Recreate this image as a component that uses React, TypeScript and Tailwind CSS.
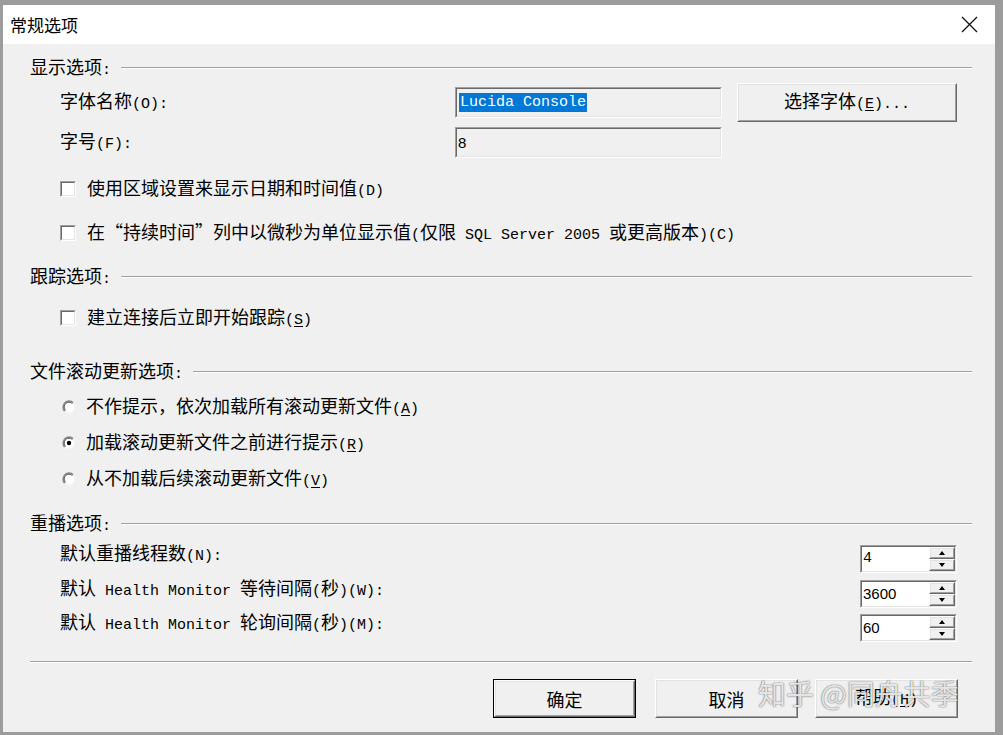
import React from "react";

function T({ s }: { s: string }) {
  const parts = s.split(/([\x20-\x7e]+)/).filter((p) => p.length > 0);
  return (
    <>
      {parts.map((p, i) => {
        if (/^[\x20-\x7e]+$/.test(p)) {
          const sub = p.split(/(&.)/).filter((q) => q.length > 0);
          return (
            <span key={i} className="font-['Liberation_Mono',monospace] text-[15px] whitespace-pre">
              {sub.map((q, j) =>
                q.startsWith("&") && q.length === 2 ? (
                  <span key={j} className="underline underline-offset-2">
                    {q[1]}
                  </span>
                ) : (
                  <span key={j}>{q}</span>
                )
              )}
            </span>
          );
        }
        return <span key={i}>{p}</span>;
      })}
    </>
  );
}

function Header({ s, mt }: { s: string; mt: string }) {
  return (
    <div className={`${mt} h-[20px] flex items-center`}>
      <span className="leading-[20px] whitespace-nowrap">
        <T s={s} />
      </span>
      <div className="flex-1 ml-[10px] mt-[-1px]">
        <div className="h-[1px] bg-[#a0a0a0]" />
        <div className="h-[1px] bg-white" />
      </div>
    </div>
  );
}

function Sunken({ className, inner, children }: { className: string; inner: string; children?: React.ReactNode }) {
  return (
    <div className={`${className} border border-t-[#a0a0a0] border-l-[#a0a0a0] border-r-white border-b-white`}>
      <div className={`w-full h-full border border-t-[#696969] border-l-[#696969] border-r-[#e3e3e3] border-b-[#e3e3e3] ${inner}`}>
        {children}
      </div>
    </div>
  );
}

function Raised({ className, children, def }: { className: string; children?: React.ReactNode; def?: boolean }) {
  const core = (
    <div className="w-full h-full border border-t-white border-l-white border-r-[#696969] border-b-[#696969]">
      <div className="w-full h-full border border-t-[#e3e3e3] border-l-[#e3e3e3] border-r-[#a0a0a0] border-b-[#a0a0a0] bg-[#f0f0f0] flex items-center justify-center">
        {children}
      </div>
    </div>
  );
  if (def) {
    return <div className={`${className} border border-black`}>{core}</div>;
  }
  return <div className={className}>{core}</div>;
}

function Checkbox({ s, mt }: { s: string; mt: string }) {
  return (
    <div className={`${mt} h-[20px] flex items-center pl-[30px]`}>
      <div className="w-[16px] h-[16px] border border-t-[#a0a0a0] border-l-[#a0a0a0] border-r-white border-b-white">
        <div className="w-full h-full border border-t-[#696969] border-l-[#696969] border-r-[#e3e3e3] border-b-[#e3e3e3] bg-white" />
      </div>
      <span className="ml-[11px] leading-[20px] whitespace-nowrap">
        <T s={s} />
      </span>
    </div>
  );
}

function Radio({ s, mt, checked }: { s: string; mt: string; checked?: boolean }) {
  return (
    <div className={`${mt} h-[20px] flex items-center pl-[32px]`}>
      <svg width="14" height="14" viewBox="0 0 14 14">
        <circle cx="7" cy="7" r="6" fill="#ffffff" />
        <path d="M2.76 11.24 A6 6 0 0 1 11.24 2.76" fill="none" stroke="#8a8a8a" strokeWidth="1.6" />
        <path d="M3.6 10.4 A4.8 4.8 0 0 1 10.4 3.6" fill="none" stroke="#5a5a5a" strokeWidth="1" />
        <path d="M11.24 2.76 A6 6 0 0 1 2.76 11.24" fill="none" stroke="#f4f4f4" strokeWidth="1.2" />
        {checked && <circle cx="7" cy="7" r="2.2" fill="#000000" />}
      </svg>
      <span className="ml-[10px] leading-[20px] whitespace-nowrap">
        <T s={s} />
      </span>
    </div>
  );
}

function SpinRow({ label, value, mt, mono }: { label: string; value: string; mt: string; mono?: boolean }) {
  return (
    <div className={`${mt} flex items-start pl-[30px] pr-[15px]`}>
      <div className="flex-1 -mt-[3px] leading-[20px] whitespace-nowrap">
        <T s={label} />
      </div>
      <Sunken className="w-[97px] h-[28px]" inner="bg-white flex items-center">
        <span
          className={`flex-1 pl-[1px] leading-[20px] ${
            mono ? "font-['Liberation_Mono',monospace] text-[15px]" : "font-['Liberation_Sans',Arial,sans-serif] text-[15px]"
          }`}
        >
          {value}
        </span>
        <div className="w-[26px] h-full flex flex-col">
          <Raised className="w-full flex-1">
            <svg width="6" height="4" viewBox="0 0 6 4">
              <path d="M0 4 L3 0 L6 4 Z" fill="#000" />
            </svg>
          </Raised>
          <Raised className="w-full flex-1">
            <svg width="6" height="4" viewBox="0 0 6 4">
              <path d="M0 0 L6 0 L3 4 Z" fill="#000" />
            </svg>
          </Raised>
        </div>
      </Sunken>
    </div>
  );
}

export default function App() {
  return (
    <div className="relative w-[1003px] h-[735px] bg-[#9c9c9c] pl-[3px] pr-[8px] pt-[5px] pb-[3px] flex flex-col font-['Noto_Sans_CJK_SC','Noto_Sans',sans-serif] text-[18px] text-black overflow-hidden">
      {/* Title bar */}
      <div className="h-[39px] bg-white flex items-center pl-[7px] pr-[17px]">
        <span className="flex-1 leading-[20px] text-[17px]">常规选项</span>
        <svg width="17" height="17" viewBox="0 0 17 17">
          <path d="M1 1 L16 16 M16 1 L1 16" stroke="#111" strokeWidth="1.3" />
        </svg>
      </div>

      {/* Body */}
      <div className="flex-1 bg-[#f0f0f0] pl-[27px] pr-[23px] pt-[14px] flex flex-col">
        <Header s="显示选项:" mt="mt-0" />

        <div className="mt-[4px] h-[40px] flex items-center pl-[30px]">
          <div className="w-[395px] leading-[20px] whitespace-nowrap">
            <T s="字体名称(O):" />
          </div>
          <Sunken className="w-[267px] h-[31px]" inner="bg-[#f0f0f0] flex items-center pl-[2px]">
            <span className="bg-[#0078d7] text-white font-['Liberation_Mono',monospace] text-[15px] leading-[19px] whitespace-pre px-[1px]">
              Lucida Console
            </span>
          </Sunken>
          <Raised className="ml-[15px] w-[220px] h-[39px]">
            <span className="leading-[20px] whitespace-nowrap">
              <T s="选择字体(&E)..." />
            </span>
          </Raised>
        </div>

        <div className="mt-[5px] h-[31px] flex items-center pl-[30px]">
          <div className="w-[395px] leading-[20px] whitespace-nowrap">
            <T s="字号(F):" />
          </div>
          <Sunken className="w-[267px] h-[31px]" inner="bg-[#f0f0f0] flex items-center pl-[1px]">
            <span className="font-['Liberation_Sans',Arial,sans-serif] text-[15px] leading-[19px]">8</span>
          </Sunken>
        </div>

        <Checkbox s="使用区域设置来显示日期和时间值(D)" mt="mt-[21px]" />
        <Checkbox s="在“持续时间”列中以微秒为单位显示值(仅限 SQL Server 2005 或更高版本)(C)" mt="mt-[24px]" />

        <Header s="跟踪选项:" mt="mt-[24px]" />
        <Checkbox s="建立连接后立即开始跟踪(&S)" mt="mt-[21px]" />

        <Header s="文件滚动更新选项:" mt="mt-[34px]" />
        <Radio s="不作提示，依次加载所有滚动更新文件(&A)" mt="mt-[15px]" />
        <Radio s="加载滚动更新文件之前进行提示(&R)" mt="mt-[16px]" checked />
        <Radio s="从不加载后续滚动更新文件(&V)" mt="mt-[16px]" />

        <Header s="重播选项:" mt="mt-[25px]" />
        <SpinRow label="默认重播线程数(N):" value="4" mt="mt-[11px]" mono />
        <SpinRow label="默认 Health Monitor 等待间隔(秒)(W):" value="3600" mt="mt-[7px]" />
        <SpinRow label="默认 Health Monitor 轮询间隔(秒)(M):" value="60" mt="mt-[6px]" />

        <div className="mt-[19px]">
          <div className="h-[1px] bg-[#a0a0a0]" />
          <div className="h-[1px] bg-white" />
        </div>

        <div className="mt-[16px] flex justify-end pr-[14px]">
          <Raised className="w-[143px] h-[39px]" def>
            <span className="leading-[20px]">确定</span>
          </Raised>
          <Raised className="ml-[19px] w-[143px] h-[39px]">
            <span className="leading-[20px]">取消</span>
          </Raised>
          <Raised className="ml-[17px] w-[143px] h-[39px]">
            <span className="leading-[20px] whitespace-nowrap">
              <T s="帮助(&H)" />
            </span>
          </Raised>
        </div>
      </div>

      {/* Watermark overlay */}
      <div className="absolute left-[758px] top-[673px] text-[28px] leading-[40px] whitespace-nowrap text-[rgba(255,255,255,0.85)] [text-shadow:0_0_1px_rgba(0,0,0,0.55),0_0_2px_rgba(0,0,0,0.35)] font-['Noto_Sans_CJK_SC',sans-serif]">
        知乎 @同舟共季
      </div>
    </div>
  );
}
